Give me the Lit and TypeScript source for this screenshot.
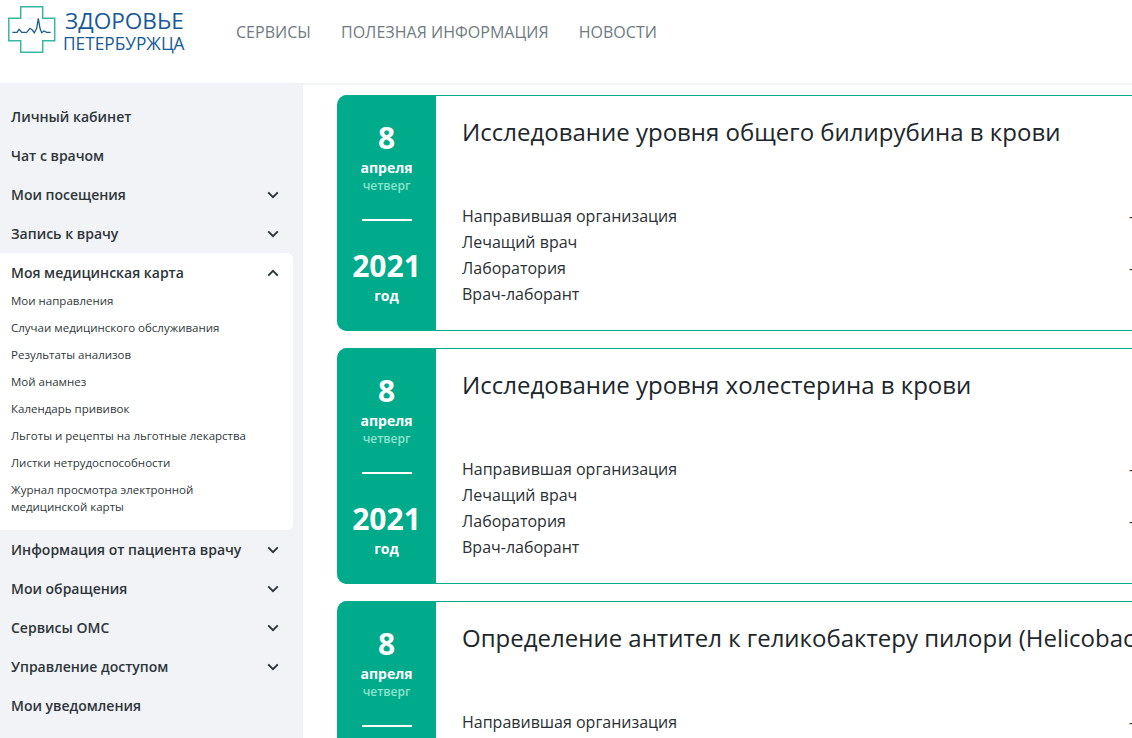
import { LitElement, html, css } from "lit";
import { customElement } from "lit/decorators.js";

const chevron = (up = false) => html`<svg class="chev" width="12" height="8" viewBox="0 0 12 8" fill="none"><path d=${up ? "M1.2 6.6 6 1.8l4.8 4.8" : "M1.2 1.4 6 6.2l4.8-4.8"} stroke="#2b3338" stroke-width="1.9"/></svg>`;

const subItems = [
  "Мои направления",
  "Случаи медицинского обслуживания",
  "Результаты анализов",
  "Мой анамнез",
  "Календарь прививок",
  "Льготы и рецепты на льготные лекарства",
  "Листки нетрудоспособности",
  "Журнал просмотра электронной медицинской карты",
];

const cards = [
  "Исследование уровня общего билирубина в крови",
  "Исследование уровня холестерина в крови",
  "Определение антител к геликобактеру пилори (Helicobacter pylori) в крови",
];

const rows = [
  ["Направившая организация", "-"],
  ["Лечащий врач", ""],
  ["Лаборатория", "-"],
  ["Врач-лаборант", ""],
];

@customElement("app-root")
export class AppRoot extends LitElement {
  static styles = css`
    :host { display: block; width: 1132px; height: 738px; overflow: hidden; background: #fff; font-family: "Open Sans", sans-serif; color: #22282c; }
    .header { height: 83px; display: flex; align-items: flex-start; box-sizing: border-box; }
    .logo { display: flex; margin: 6px 0 0 8px; width: 198px; gap: 7px; }
    .logo-text { display: flex; flex-direction: column; color: #175a98; margin-top: 2px; }
    .logo-1 { font-size: 22.6px; line-height: 26px; margin-left: 2px; }
    .logo-2 { font-size: 17.3px; line-height: 19px; }
    .nav { display: flex; gap: 30px; margin: 21px 0 0 30px; font-size: 16px; letter-spacing: 0.03px; line-height: 22px; color: #6e7b80; }
    .strip { height: 2px; background: #f2f3f5; margin-left: 303px; }
    .main { display: flex; height: 655px; margin-top: -2px; }
    .side { width: 303px; flex: none; background: #f2f3f7; padding-top: 14px; box-sizing: border-box; }
    .item { display: flex; align-items: center; justify-content: space-between; height: 39px; padding: 0 14px 0 11px; width: 293px; box-sizing: border-box; font-size: 14px; font-weight: 600; color: #2d3539; }
    .open { background: #fff; width: 293px; border-radius: 0 6px 6px 0; padding-bottom: 10px; }
    .sub { font-size: 11.5px; line-height: 17px; color: #30383c; padding: 5px 30px 5px 11px; }
    .subs { margin-top: -5px; }
    .content { flex: 1; min-width: 0; padding: 12px 0 0 34px; display: flex; flex-direction: column; gap: 17px; overflow: hidden; }
    .card { display: flex; flex: none; width: 860px; height: 236px; box-sizing: border-box; border: 1px solid #00ab8b; border-left: 0; border-radius: 10px 0 0 10px; }
    .date { width: 99px; flex: none; margin: -1px 0; background: #00ab8b; border-radius: 10px 0 0 10px; color: #fff; display: flex; flex-direction: column; align-items: center; font-weight: 700; }
    .day { font-size: 30px; line-height: 40px; margin-top: 23px; }
    .month { font-size: 14px; line-height: 20px; }
    .week { font-size: 12px; line-height: 16px; font-weight: 600; color: #8fe3cf; }
    .line { width: 50px; height: 2px; background: #fff; margin-top: 25px; }
    .year { font-size: 30px; line-height: 40px; margin-top: 25px; }
    .ylabel { font-size: 14px; line-height: 20px; }
    .body { flex: 1; min-width: 0; padding: 19px 0 0 26px; white-space: nowrap; overflow: hidden; }
    .title { font-size: 24px; line-height: 34px; color: #20262a; }
    .rows { margin-top: 54px; font-size: 16px; line-height: 26px; color: #2a3034; }
    .row { display: grid; grid-template-columns: 667px auto; }
  `;

  render() {
    return html`
      <div class="header">
        <div class="logo">
          <svg width="48" height="48" viewBox="0 0 48 48" fill="none" style="flex:none">
            <path d="M12.7.8h22v11.5h12v22.4h-12v11.6h-22V34.7H.8V12.3h11.9z" stroke="#36b7a0" stroke-width="1.5"/>
            <path d="M4.3 26.3H9l2-3 2.7 3H17l1.5.3L22 22.3l2.3 1.7 2 2.7 2.4-4.4 1.6-10 1.7 10 1.7 4.4 2.3-1.7 2.7 1.3h4" stroke="#1f5f8f" stroke-width="1.3"/>
          </svg>
          <div class="logo-text">
            <div class="logo-1">ЗДОРОВЬЕ</div>
            <div class="logo-2">ПЕТЕРБУРЖЦА</div>
          </div>
        </div>
        <div class="nav"><span>СЕРВИСЫ</span><span>ПОЛЕЗНАЯ ИНФОРМАЦИЯ</span><span>НОВОСТИ</span></div>
      </div>
      <div class="strip"></div>
      <div class="main">
        <div class="side">
          <div class="item">Личный кабинет</div>
          <div class="item">Чат с врачом</div>
          <div class="item">Мои посещения ${chevron()}</div>
          <div class="item">Запись к врачу ${chevron()}</div>
          <div class="open">
            <div class="item">Моя медицинская карта ${chevron(true)}</div>
            <div class="subs">${subItems.map((s) => html`<div class="sub">${s}</div>`)}</div>
          </div>
          <div class="item">Информация от пациента врачу ${chevron()}</div>
          <div class="item">Мои обращения ${chevron()}</div>
          <div class="item">Сервисы ОМС ${chevron()}</div>
          <div class="item">Управление доступом ${chevron()}</div>
          <div class="item">Мои уведомления</div>
        </div>
        <div class="content">
          ${cards.map((t) => html`
            <div class="card">
              <div class="date">
                <div class="day">8</div>
                <div class="month">апреля</div>
                <div class="week">четверг</div>
                <div class="line"></div>
                <div class="year">2021</div>
                <div class="ylabel">год</div>
              </div>
              <div class="body">
                <div class="title">${t}</div>
                <div class="rows">
                  ${rows.map(([k, v]) => html`<div class="row"><span>${k}</span><span>${v}</span></div>`)}
                </div>
              </div>
            </div>`)}
        </div>
      </div>
    `;
  }
}
